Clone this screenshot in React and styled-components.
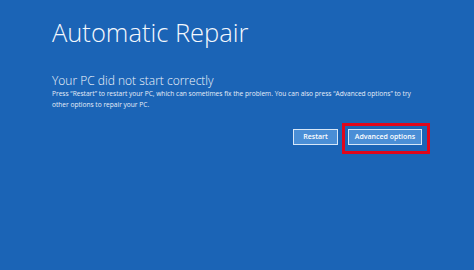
import React from 'react'
import styled, { createGlobalStyle } from 'styled-components'

const GlobalStyle = createGlobalStyle`
  html, body {
    margin: 0;
    padding: 0;
    background: #1b64b6;
  }
  body {
    font-family: "Open Sans", "Noto Sans", sans-serif;
  }
`

const Screen = styled.div`
  width: 474px;
  height: 270px;
  background: #1b64b6;
  color: #ffffff;
  box-sizing: border-box;
  padding: 14px 44px 0 52px;
  overflow: hidden;
`

const Title = styled.h1`
  margin: 0;
  font-size: 25.5px;
  font-weight: 300;
  line-height: 36px;
  color: #f4f8fd;
`

const Subtitle = styled.h2`
  margin: 23px 0 0;
  font-size: 12px;
  font-weight: 300;
  line-height: 15px;
  color: #f0f5fb;
`

const Message = styled.p`
  margin: 0;
  width: 372px;
  font-size: 6.6px;
  line-height: 11px;
  color: #e6eef9;
`

const Actions = styled.div`
  display: flex;
  justify-content: flex-end;
  gap: 10px;
  margin-top: 19px;
  padding-right: 8px;
`

const Button = styled.button`
  font-family: "Open Sans", "Noto Sans", sans-serif;
  height: 16px;
  width: ${p => p.$width}px;
  padding: 0;
  background: #4a8ed6;
  border: 1.5px solid #d6e6f8;
  color: #ffffff;
  font-size: 7px;
  font-weight: 600;
  line-height: 12px;
  box-sizing: border-box;
`

const Highlight = styled.span`
  position: relative;
  display: inline-flex;

  &::after {
    content: '';
    position: absolute;
    left: -6px;
    right: -8px;
    top: -6px;
    bottom: -9px;
    border: 3px solid #e0061b;
    pointer-events: none;
  }
`

export default function App() {
  return (
    <>
      <GlobalStyle />
      <Screen>
        <Title>Automatic Repair</Title>
        <Subtitle>Your PC did not start correctly</Subtitle>
        <Message>
          Press “Restart” to restart your PC, which can sometimes fix the problem. You can also press
          “Advanced options” to try other options to repair your PC.
        </Message>
        <Actions>
          <Button $width={45}>Restart</Button>
          <Highlight>
            <Button $width={74}>Advanced options</Button>
          </Highlight>
        </Actions>
      </Screen>
    </>
  )
}
